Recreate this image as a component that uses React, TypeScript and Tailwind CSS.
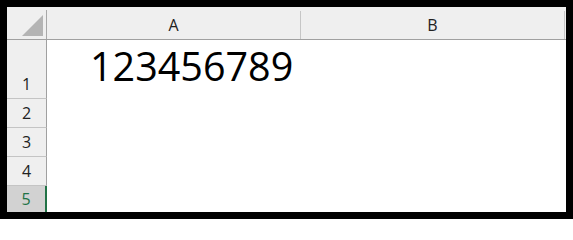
export default function App() {
  const rows = [
    { n: "1", h: "h-[59px]" },
    { n: "2", h: "h-[29px]" },
    { n: "3", h: "h-[29px]" },
    { n: "4", h: "h-[29px]" },
  ];

  return (
    <div className="w-[573px] h-[219px] bg-black p-[7px]" style={{ fontFamily: '"Open Sans", sans-serif' }}>
      <div className="w-[559px] h-[205px] bg-white flex flex-col">
        {/* column headers */}
        <div className="h-[33px] flex bg-[#efefef] border-b border-[#a0a0a0]">
          <div className="w-[40px] flex">
            <div className="flex-1 pl-[15px] pt-[8px]">
              <svg width="21" height="21" viewBox="0 0 21 21">
                <polygon points="0,21 21,21 21,0" fill="#b4b4b4" />
              </svg>
            </div>
            <div className="self-end h-[29px] w-px bg-[#a8a8a8]" />
          </div>
          <div className="w-[254px] flex">
            <div className="flex-1 pt-[10px] text-center text-[16px] leading-none text-[#222]">A</div>
            <div className="self-end h-[28px] w-px bg-[#c6c6c6]" />
          </div>
          <div className="w-[265px] flex pr-px">
            <div className="flex-1 pt-[10px] text-center text-[16px] leading-none text-[#222]">B</div>
            <div className="self-end h-[28px] w-px bg-[#c6c6c6]" />
          </div>
        </div>

        {/* rows */}
        {rows.map((r) => (
          <div key={r.n} className={`${r.h} flex`}>
            <div className="w-[40px] flex items-end justify-center pb-[6px] bg-[#efefef] border-r border-b border-r-[#a0a0a0] border-b-[#c4c4c4] text-[16px] leading-none text-[#222]">
              {r.n}
            </div>
            <div className="w-[254px]">
              {r.n === "1" && (
                <div className="pl-[43px] pt-[7px] text-[39.5px] leading-none text-black">123456789</div>
              )}
            </div>
          </div>
        ))}
        <div className="h-[26px] flex">
          <div className="w-[40px] flex items-end justify-center pb-[5px] bg-[#d2d2d2] border-r-2 border-[#217346] text-[16px] leading-none text-[#217346]">
            5
          </div>
        </div>
      </div>
    </div>
  );
}
